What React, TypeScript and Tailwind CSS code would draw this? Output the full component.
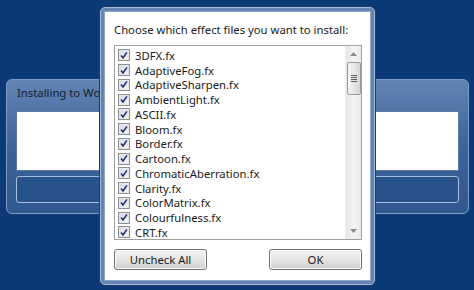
import React from "react";

const items = [
  "3DFX.fx",
  "AdaptiveFog.fx",
  "AdaptiveSharpen.fx",
  "AmbientLight.fx",
  "ASCII.fx",
  "Bloom.fx",
  "Border.fx",
  "Cartoon.fx",
  "ChromaticAberration.fx",
  "Clarity.fx",
  "ColorMatrix.fx",
  "Colourfulness.fx",
  "CRT.fx",
];

function Check() {
  return (
    <div className="w-[12px] h-[12px] shrink-0 border border-[#8f8f8f] bg-gradient-to-br from-[#dcdcdc] to-[#fbfbfb] flex items-center justify-center">
      <div className="w-[10px] h-[10px] border border-[#e8e8e8] bg-gradient-to-br from-[#d9dbe6] to-[#f6f6f8] flex items-center justify-center">
        <svg width="9" height="9" viewBox="0 0 9 9">
          <path d="M1.2 4.6 L3.4 7.2 L7.8 1" fill="none" stroke="#1f2d7a" strokeWidth="1.8" />
        </svg>
      </div>
    </div>
  );
}

function Button({ label, w }: { label: string; w: string }) {
  return (
    <div
      className={`${w} h-[21px] rounded-[3px] border border-[#707070] bg-gradient-to-b from-[#f2f2f2] via-[#e6e6e6] to-[#cfcfcf] flex items-center justify-center text-[11.3px] leading-[13px] text-[#1a1a1a] shadow-[inset_0_0_0_1px_#fbfbfb]`}
    >
      {label}
    </div>
  );
}

export default function App() {
  return (
    <div
      className="relative w-[474px] h-[290px] overflow-hidden bg-[#0c3a78]"
      style={{ fontFamily: '"Noto Sans", "Open Sans", sans-serif' }}
    >
      {/* back window */}
      <div className="absolute left-[6px] top-[79px] w-[463px] h-[135px] rounded-[6px] border border-[#7e9bc4] bg-gradient-to-b from-[#6284b4] via-[#3d6499] to-[#2e5890] px-[9px]">
        <div className="h-[31px] pt-[6px] text-[11.3px] leading-[13px] text-[#141e2c] pl-[1px]">
          Installing to Worksp
        </div>
        <div className="h-[60px] bg-white border border-[#5c7ba6]" />
        <div className="mt-[5px] h-[27px] rounded-[3px] border border-[#a9bfde] bg-[#28528c]" />
      </div>

      {/* front dialog */}
      <div className="absolute left-[100px] top-[7px] w-[275px] h-[278px] rounded-[5px] border border-[#a4b8d4] bg-[#6584b1] p-[3px] shadow-[0_0_0_1px_#1d3c6b]">
        <div className="w-full h-full bg-white border border-[#8ba5c9] pl-[9px] pr-[8px] flex flex-col">
          <div className="h-[33px] pt-[11px] text-[11.3px] leading-[14px] text-[#1a1a1a] whitespace-nowrap">
            Choose which effect files you want to install:
          </div>
          <div className="h-[195px] border border-[#a0a0a0] flex overflow-hidden">
            <div className="flex-1 pt-[2px] pl-[3px] overflow-hidden">
              {items.map((t) => (
                <div key={t} className="h-[14.75px] flex items-center gap-[5px]">
                  <Check />
                  <span className="text-[11.3px] leading-[13px] text-[#1a1a1a] whitespace-nowrap">{t}</span>
                </div>
              ))}
            </div>
            <div className="w-[16px] bg-gradient-to-r from-[#e6e6e6] via-[#f4f4f4] to-[#eaeaea] border-l border-[#f0f0f0] flex flex-col items-center">
              <div className="h-[16px] flex items-center justify-center">
                <svg width="7" height="4" viewBox="0 0 7 4">
                  <path d="M0 4 L3.5 0 L7 4 Z" fill="#8a8a8a" />
                </svg>
              </div>
              <div className="w-[14px] h-[33px] rounded-[2px] border border-[#9a9a9a] bg-gradient-to-r from-[#f4f4f4] via-[#e8e8e8] to-[#d6d6d6] flex flex-col items-center justify-center gap-[1px]">
                <div className="w-[6px] h-[1px] bg-[#5d5d5d]" />
                <div className="w-[6px] h-[1px] bg-[#5d5d5d]" />
                <div className="w-[6px] h-[1px] bg-[#5d5d5d]" />
                <div className="w-[6px] h-[1px] bg-[#5d5d5d]" />
              </div>
              <div className="flex-1" />
              <div className="h-[16px] flex items-center justify-center">
                <svg width="7" height="4" viewBox="0 0 7 4">
                  <path d="M0 0 L3.5 4 L7 0 Z" fill="#8a8a8a" />
                </svg>
              </div>
            </div>
          </div>
          <div className="mt-[9px] flex justify-between">
            <Button label="Uncheck All" w="w-[93px]" />
            <Button label="OK" w="w-[93px]" />
          </div>
        </div>
      </div>
    </div>
  );
}
